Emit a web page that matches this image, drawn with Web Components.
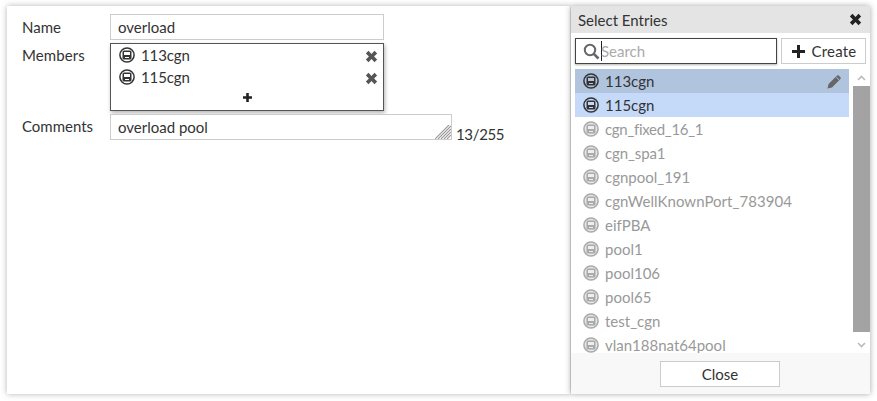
<!DOCTYPE html>
<html><head><meta charset="utf-8"><style>
html,body{margin:0;padding:0;height:401px;overflow:hidden;background:#fff;font-family:Lato,"Liberation Sans",sans-serif;color:#333}
</style></head><body>
<app-page></app-page>
<script>
const defs=(n,css,html)=>{customElements.define(n,class extends HTMLElement{
  connectedCallback(){ if(this.shadowRoot)return; const s=this.attachShadow({mode:'open'});
    s.innerHTML='<style>'+css+'</style>'+(typeof html==='function'?html(this):html);}
});};
const poolIcon=`<svg width="16" height="16" viewBox="0 0 16 16" aria-hidden="true"><circle cx="8" cy="8" r="7.1" fill="var(--if,none)" stroke="currentColor" stroke-width="1.5"/><rect x="3.5" y="3.5" width="9" height="9" rx="1.6" fill="currentColor"/><rect x="5" y="5" width="6" height="3" fill="var(--ib,#fff)"/><rect x="6" y="10" width="4" height="1" fill="var(--ib,#fff)"/></svg>`;
const xIcon=(z)=>`<svg width="${z}" height="${z}" viewBox="0 0 12 12" aria-hidden="true"><path d="M.8 3.2 3.2.8 6 3.6 8.8.8 11.2 3.2 8.4 6 11.2 8.8 8.8 11.2 6 8.4 3.2 11.2.8 8.8 3.6 6Z" fill="currentColor"/></svg>`;

defs('form-row',`:host{display:flex;align-items:flex-start}
.l{width:88px;flex:none;font-size:15px;line-height:26px;color:#333;margin-top:var(--lt,0);letter-spacing:var(--ls,0)}
.c{display:flex;align-items:flex-end}`,
t=>`<div class="l">${t.getAttribute('label')}</div><div class="c"><slot></slot></div>`);

defs('text-box',`:host{display:block;box-sizing:border-box;height:26px;border:1px solid #ccc;background:#fff;padding:0 7px;font-size:15px;line-height:24px;color:#333;position:relative}
svg{position:absolute;right:0;bottom:0}`,
t=>`<slot></slot>`+(t.hasAttribute('grip')?`<svg width="16" height="14" viewBox="0 0 16 14"><g stroke="#999" stroke-width="1.1" fill="none"><path d="M0 14 14 0M3 14 16 1M6 14 16 4M9 14 16 7M12 14 16 10"/></g></svg>`:''));

defs('member-item',`:host{display:flex;align-items:center;height:22px;padding:0 5px 0 8px;font-size:15px;color:#333;letter-spacing:-.1px}
.i{width:16px;height:16px;margin-right:6px;color:#333;display:flex}
.n{flex:1}.x{color:#555;display:flex;margin-top:2px}`,
t=>`<span class="i">${poolIcon}</span><span class="n">${t.getAttribute('name')}</span><span class="x">${xIcon(13)}</span>`);

defs('member-box',`:host{display:block;box-sizing:border-box;width:274px;height:68px;border:1px solid #555;background:#fff;box-shadow:1px 2px 4px rgba(0,0,0,.3)}
.p{display:flex;justify-content:center;height:19px;align-items:center;color:#222}`,
`<slot></slot><div class="p"><svg width="9" height="9" viewBox="0 0 9 9"><path d="M3.2 0h2.6v3.2H9v2.6H5.8V9H3.2V5.8H0V3.2h3.2z" fill="currentColor"/></svg></div>`);

defs('edit-form',`:host{display:flex;flex-direction:column;box-sizing:border-box;width:563px;height:388px;background:#fff;padding:8px 15px;gap:3px;box-shadow:0 0 6px rgba(0,0,0,.3)}`,`<slot></slot>`);

defs('entry-row',`:host{display:flex;align-items:center;height:24px;padding:0 7px 0 8px;font-size:15px;color:#999;--ib:#eee;--if:#e4e4e4;letter-spacing:var(--ls,0)}
:host([sel]){color:#333;background:#c5d9f8;--ib:#c5d9f8;--if:none}
:host([cur]){background:#b0c4de;--ib:#b0c4de}
.i{width:16px;height:16px;margin-right:6px;display:flex;color:#aaa}
:host([sel]) .i{color:#333}
.n{flex:1;white-space:nowrap}`,
t=>`<span class="i">${poolIcon}</span><span class="n">${t.getAttribute('name')}</span>`+(t.hasAttribute('cur')?`<svg width="15" height="15" viewBox="0 0 15 15"><path d="M0.5 14.5 1.6 10 10 1.6a1.2 1.2 0 0 1 1.7 0l1.7 1.7a1.2 1.2 0 0 1 0 1.7L5 13.4Z" fill="#666"/><path d="M9.2 3 12 5.8" stroke="#b0c4de" stroke-width="1"/></svg>`:''));

defs('scroll-rail',`:host{display:flex;flex-direction:column;width:17px;height:100%;flex:none}
.a{height:17px;display:flex;align-items:center;justify-content:center}
.t{width:17px;height:246px;background:#a3a3a3}
.s{flex:1}`,
`<div class="a"><svg width="9" height="6" viewBox="0 0 9 6"><path d="M1 5 4.5 1.5 8 5" fill="none" stroke="#bbb" stroke-width="1.6"/></svg></div><div class="t"></div><div class="s"></div><div class="a"><svg width="9" height="6" viewBox="0 0 9 6"><path d="M1 1 4.5 4.5 8 1" fill="none" stroke="#bbb" stroke-width="1.6"/></svg></div>`);

defs('entry-panel',`:host{display:flex;flex-direction:column;box-sizing:border-box;width:299px;height:388px;background:#fff;box-shadow:0 0 6px rgba(0,0,0,.35);margin-left:1px}
.h{height:27px;background:#e4e4e4;display:flex;align-items:center;justify-content:space-between;padding:0 8px 0 7px;font-size:15px;color:#333;flex:none}
.h span{display:flex}
.b{display:flex;gap:4px;padding:5px 4px 5px 4px;flex:none;height:26px}
.s{box-sizing:border-box;width:202px;height:26px;border:1px solid #444;box-shadow:0 1px 2px rgba(0,0,0,.3);display:flex;align-items:center;padding-left:7px;font-size:15px;color:#aaa;background:#fff}
.s svg{flex:none;margin-right:1px}
.caret{width:1px;height:20px;background:#222;margin-right:-1px;flex:none}
.k{box-sizing:border-box;width:85px;height:26px;border:1px solid #ccc;background:#fff;display:flex;align-items:center;justify-content:center;gap:7px;font-size:15px;color:#333;letter-spacing:.2px;padding-left:1px}
.m{flex:1;min-height:0;display:flex;padding-left:4px;overflow:hidden}
.l{width:274px;flex:none;overflow:hidden;height:100%}
.g{width:4px;flex:none}
.f{height:41px;flex:none;background:#f8f8f8;display:flex;align-items:center;justify-content:center;padding-right:1px}
.c{box-sizing:border-box;width:120px;height:26px;border:1px solid #ccc;background:#fff;font-size:15px;color:#333;text-align:center;line-height:24px}`,
`<div class="h">Select Entries<span>${xIcon(13).replace('currentColor','#222')}</span></div>
<div class="b"><div class="s"><svg width="17" height="17" viewBox="0 0 17 17"><circle cx="7" cy="7" r="5.2" fill="none" stroke="#666" stroke-width="2"/><path d="M10.8 10.8 15.5 15.5" stroke="#666" stroke-width="2.6"/></svg><i class="caret"></i>Search</div>
<div class="k"><svg width="13" height="13" viewBox="0 0 13 13"><path d="M5 0h3v5h5v3H8v5H5V8H0V5h5z" fill="#222"/></svg>Create</div></div>
<div class="m"><div class="l"><slot></slot></div><div class="g"></div><scroll-rail></scroll-rail></div>
<div class="f"><div class="c">Close</div></div>`);

defs('app-page',`:host{display:flex;box-sizing:border-box;width:877px;height:401px;padding:6px 7px}
.cnt{font-size:15px;color:#333;margin-left:4px;line-height:18px;position:relative;top:3px;white-space:nowrap;letter-spacing:-.35px}`,
`<edit-form>
<form-row label="Name"><text-box style="width:274px">overload</text-box></form-row>
<form-row label="Members" style="--lt:-1px;--ls:.1px"><member-box><member-item name="113cgn"></member-item><member-item name="115cgn"></member-item></member-box></form-row>
<form-row label="Comments" style="--lt:-1px"><text-box grip style="width:342px">overload pool</text-box><span class="cnt">13/255</span></form-row>
</edit-form>
<entry-panel>
<entry-row name="113cgn" sel cur></entry-row>
<entry-row name="115cgn" sel></entry-row>
<entry-row name="cgn_fixed_16_1" style="--ls:-.3px"></entry-row>
<entry-row name="cgn_spa1" style="--ls:-.1px"></entry-row>
<entry-row name="cgnpool_191"></entry-row>
<entry-row name="cgnWellKnownPort_783904" style="--ls:.04px"></entry-row>
<entry-row name="eifPBA"></entry-row>
<entry-row name="pool1"></entry-row>
<entry-row name="pool106"></entry-row>
<entry-row name="pool65"></entry-row>
<entry-row name="test_cgn"></entry-row>
<entry-row name="vlan188nat64pool"></entry-row>
</entry-panel>`);
</script>
</body></html>
